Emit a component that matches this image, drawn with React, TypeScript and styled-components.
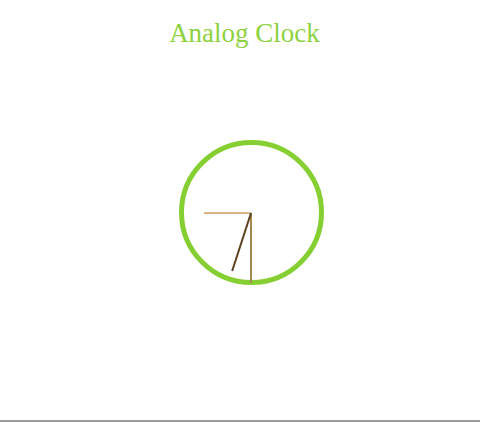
import styled, { createGlobalStyle } from "styled-components";

const GlobalStyle = createGlobalStyle`
    html, body {
        margin: 0;
        padding: 0;
        background: #ffffff;
    }
    * {
        box-sizing: border-box;
    }
`

type HandProps = {
    angle: number
    length: number
    color: string
}

const hands: HandProps[] = [
    {angle: 270, length: 47, color: "#dcb586"},
    {angle: 180, length: 70, color: "#a8874a"},
    {angle: 198, length: 61, color: "#5c4220"},
]

export default function App() {
    return (
        <>
            <GlobalStyle/>
            <Page>
                <Title>Analog Clock</Title>
                <Stage>
                    <Face>
                        {hands.map((h, i) => (
                            <Hand
                                key={i}
                                $length={h.length}
                                $color={h.color}
                                style={{transform: `rotate(${h.angle}deg)`}}
                            />
                        ))}
                    </Face>
                </Stage>
            </Page>
        </>
    )
}

const Page = styled.div`
    height: 422px;
    display: flex;
    flex-direction: column;
    border-bottom: 2px solid #9a9a9a;
`

const Title = styled.h1`
    margin: 0;
    padding: 17px 0 0 9px;
    text-align: center;
    font-family: "Liberation Serif", "Times New Roman", serif;
    font-weight: normal;
    font-size: 27px;
    line-height: 32px;
    color: #8cd23e;
`

const Stage = styled.div`
    display: flex;
    justify-content: center;
    padding-left: 22px;
    margin-top: 91px;
`

const Face = styled.div`
    position: relative;
    width: 145px;
    height: 145px;
    border: 5px solid #86cf33;
    border-radius: 50%;
`

const Hand = styled.div<{ $length: number; $color: string }>`
    position: absolute;
    left: calc(50% - 1px);
    bottom: 50%;
    width: 2px;
    height: ${p => p.$length}px;
    background: ${p => p.$color};
    transform-origin: 50% 100%;
`
